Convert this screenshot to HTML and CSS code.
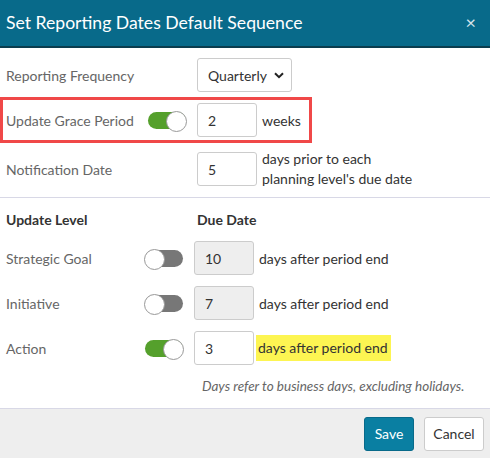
FILE: index.html
```html
<!DOCTYPE html>
<html lang="en">

<head>
  <meta charset="UTF-8">
  <title>Set Reporting Dates Default Sequence</title>
  <link rel="stylesheet" href="styles.css">
</head>

<body>
  <div class="modal">
    <div class="modal-header">
      <span class="title">Set Reporting Dates Default Sequence</span>
      <span class="close">&times;</span>
    </div>

    <div class="modal-body">
      <div class="row">
        <label class="label wide">Reporting Frequency</label>
        <div class="select">
          <span>Quarterly</span>
          <svg width="10" height="7" viewBox="0 0 10 7"><path d="M1 1.2 5 5.2 9 1.2" fill="none" stroke="#222" stroke-width="2"/></svg>
        </div>
      </div>

      <div class="row boxed">
        <label class="label">Update Grace Period</label>
        <span class="switch on"></span>
        <input class="num" type="text" value="2">
        <span class="after">weeks</span>
      </div>

      <div class="row">
        <label class="label wide">Notification Date</label>
        <input class="num" type="text" value="5">
        <span class="after two">days prior to each<br>planning level's due date</span>
      </div>

      <hr>

      <div class="row heads">
        <span class="label wide">Update Level</span>
        <span>Due Date</span>
      </div>

      <div class="row level">
        <label class="label">Strategic Goal</label>
        <span class="switch"></span>
        <input class="num" type="text" value="10" disabled>
        <span class="after">days after period end</span>
      </div>

      <div class="row level">
        <label class="label">Initiative</label>
        <span class="switch"></span>
        <input class="num" type="text" value="7" disabled>
        <span class="after">days after period end</span>
      </div>

      <div class="row level">
        <label class="label">Action</label>
        <span class="switch on"></span>
        <input class="num" type="text" value="3">
        <span class="after mark">days after period end</span>
      </div>

      <p class="note">Days refer to business days, excluding holidays.</p>
    </div>

    <div class="modal-footer">
      <button class="btn primary">Save</button>
      <button class="btn">Cancel</button>
    </div>
  </div>
</body>

</html>
```

FILE: styles.css
```css
* {
  box-sizing: border-box;
}

body {
  margin: 0;
  font-family: "Lato", "Noto Sans", sans-serif;
  font-size: 14px;
  color: #333;
  background: #fff;
}

.modal {
  width: 490px;
  height: 458px;
  display: flex;
  flex-direction: column;
}

.modal-header {
  height: 48px;
  background: #086a8a;
  border-bottom: 2px solid #0b3d4e;
  color: #fff;
  display: flex;
  align-items: center;
  justify-content: space-between;
  padding: 0 14px 2px 6px;
}

.title {
  font-size: 17.6px;
}

.close {
  font-size: 18px;
  color: #d6e4ea;
}

.modal-body {
  flex: 1;
  padding: 10px 6px 0;
}

.row {
  display: flex;
  align-items: center;
  height: 34px;
  margin-bottom: 11px;
}

.label {
  width: 142px;
  color: #666;
  flex-shrink: 0;
}

.label.wide {
  width: 191px;
}

.select {
  width: 95px;
  height: 34px;
  border: 1px solid #ccc;
  border-radius: 3px;
  display: flex;
  align-items: center;
  justify-content: space-between;
  padding: 0 7px 0 10px;
}

.boxed {
  height: 46px;
  width: 312px;
  margin: -6px 0 9px -6px;
  padding: 0 3px;
  border: 3px solid #f04848;
}

.switch {
  position: relative;
  width: 38px;
  height: 17px;
  border-radius: 9px;
  background: #777;
  margin-right: 11px;
}

.switch::after {
  content: "";
  position: absolute;
  left: -1px;
  top: -1px;
  width: 19px;
  height: 19px;
  border-radius: 50%;
  background: #fff;
  border: 1px solid #999;
}

.switch.on {
  background: #55a02c;
}

.switch.on::after {
  left: auto;
  right: -1px;
}

.num {
  width: 60px;
  height: 34px;
  border: 1px solid #ccc;
  border-radius: 3px;
  padding: 0 10px;
  font: inherit;
  color: #333;
  background: #fff;
}

.num:disabled {
  background: #eee;
}

.after {
  margin-left: 5px;
}

.after.two {
  line-height: 20px;
}

.mark {
  background: #fdf552;
  padding: 4px 3px 5px 2px;
  margin-left: 2px;
}

hr {
  border: 0;
  border-top: 1px solid #d8d8e6;
  margin: 1px -6px 0;
}

.heads {
  font-weight: bold;
  height: 20px;
  margin: 11px 0 12px;
}

.heads .label {
  color: #333;
}

.level .label {
  width: 139px;
}

.note {
  margin: 13px 0 0 196px;
  font-style: italic;
  color: #666;
  font-size: 13.5px;
}

.modal-footer {
  height: 50px;
  border-top: 1px solid #d8d8e6;
  background: #eee;
  display: flex;
  justify-content: flex-end;
  align-items: center;
  gap: 10px;
  padding: 0 6px 0 0;
}

.btn {
  height: 34px;
  width: 60px;
  padding: 0;
  border: 1px solid #ccc;
  border-radius: 3px;
  background: #fff;
  font: inherit;
  color: #333;
}

.btn.primary {
  background: #0a7fa2;
  border-color: #086a8a;
  color: #fff;
  width: 50px;
}
```
